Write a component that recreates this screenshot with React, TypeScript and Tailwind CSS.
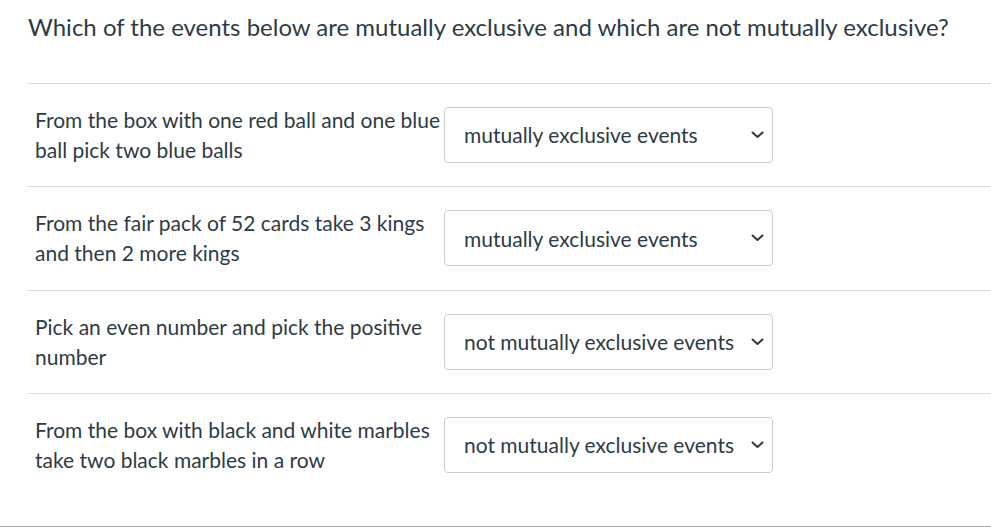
import React from 'react';

const ROWS = [
  { text: 'From the box with one red ball and one blue ball pick two blue balls', value: 'mutually exclusive events' },
  { text: 'From the fair pack of 52 cards take 3 kings and then 2 more kings', value: 'mutually exclusive events' },
  { text: 'Pick an even number and pick the positive number', value: 'not mutually exclusive events' },
  { text: 'From the box with black and white marbles take two black marbles in a row', value: 'not mutually exclusive events' },
];

function Chevron() {
  return (
    <svg width="13" height="8" viewBox="0 0 13 8" fill="none">
      <path d="M1.5 1.5 L6.5 6 L11.5 1.5" stroke="#2d3b45" strokeWidth="2" strokeLinecap="round" strokeLinejoin="round" />
    </svg>
  );
}

export default function App() {
  return (
    <div className="w-[991px] h-[531px] bg-white overflow-hidden text-[#2d3b45]" style={{ fontFamily: 'Lato, "Open Sans", sans-serif' }}>
      <div className="pl-[27px] pt-[11px]">
        <p className="text-[24px] leading-[32px] pl-[1px]">
          Which of the events below are mutually exclusive and which are not mutually exclusive?
        </p>
      </div>

      <div className="ml-[27px] mt-[40px]">
        {ROWS.map((row, i) => (
          <div key={i} className="border-t border-[#dcdfe2] flex items-start pl-[8px] pt-[21px] h-[103.3px]">
            <p className="w-[409px] text-[21px] leading-[30px] pr-[2px]">{row.text}</p>
            <div className="w-[329px] h-[56px] mt-[2px] border border-[#c7cdd1] rounded-[4px] flex items-center justify-between pl-[19px] pr-[8px]">
              <span className="text-[21px]">{row.value}</span>
              <Chevron />
            </div>
          </div>
        ))}
      </div>
      <div className="mt-[30px] border-t border-[#a5afb5]" />
    </div>
  );
}
